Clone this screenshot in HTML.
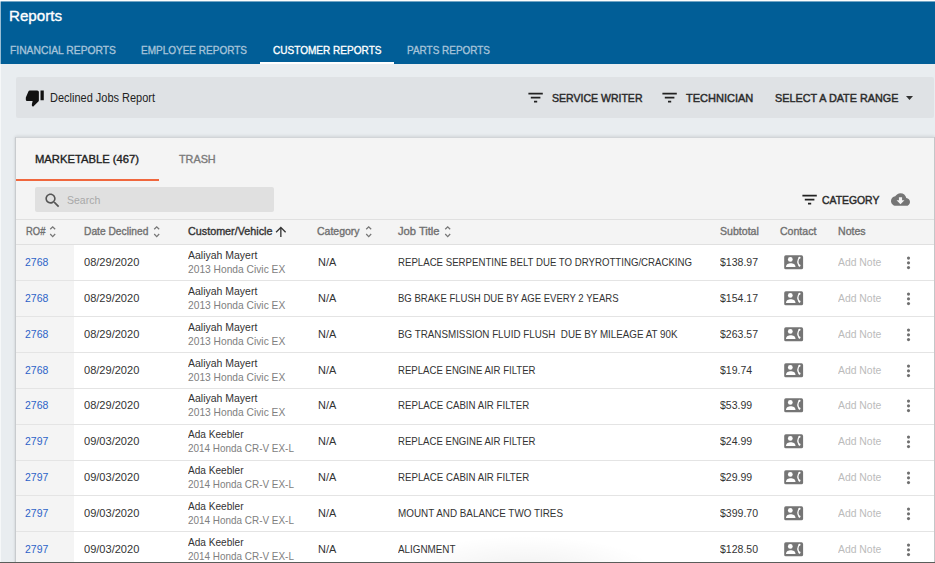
<!DOCTYPE html><html><head><meta charset="utf-8"><style>
html,body{margin:0;padding:0;width:935px;height:563px;overflow:hidden;background:#e9edf0;}
body{position:relative;font-family:"Liberation Sans",sans-serif;}
div{position:absolute;}
.t{white-space:nowrap;line-height:1;transform-origin:0 0;}
</style></head><body>
<div style="left:0px;top:0px;width:935px;height:563px;background:#e9edf0;"></div>
<div style="left:0px;top:1px;width:935px;height:63px;background:#015e97;"></div>
<div class="t" style="left:8.6px;top:7.80px;font-size:15px;font-weight:normal;color:#fff;-webkit-text-stroke:0.35px #fff;transform:scaleX(1.0091);">Reports</div>
<div class="t" style="left:10px;top:45.19px;font-size:11px;font-weight:normal;color:#a6c3d9;-webkit-text-stroke:0.35px #a6c3d9;transform:scaleX(0.9374);">FINANCIAL REPORTS</div>
<div class="t" style="left:141px;top:45.19px;font-size:11px;font-weight:normal;color:#a6c3d9;-webkit-text-stroke:0.35px #a6c3d9;transform:scaleX(0.9094);">EMPLOYEE REPORTS</div>
<div class="t" style="left:273px;top:45.19px;font-size:11px;font-weight:normal;color:#fff;-webkit-text-stroke:0.35px #fff;transform:scaleX(0.9135);">CUSTOMER REPORTS</div>
<div class="t" style="left:407px;top:45.19px;font-size:11px;font-weight:normal;color:#a6c3d9;-webkit-text-stroke:0.35px #a6c3d9;transform:scaleX(0.9052);">PARTS REPORTS</div>
<div style="left:260px;top:62px;width:134px;height:2px;background:#fff;"></div>
<div style="left:16px;top:77px;width:918px;height:41px;background:#dfe2e5;border-radius:2px;"></div>
<svg style="position:absolute;left:25.0px;top:88.0px;width:19.6px;height:19.6px;" viewBox="0 0 24 24"><path fill="#111" d="M15 3H6c-.83 0-1.54.5-1.84 1.22l-3.02 7.05c-.09.23-.14.47-.14.73v2c0 1.1.9 2 2 2h6.31l-.95 4.57-.03.32c0 .41.17.79.44 1.06L9.83 23l6.58-6.59c.37-.36.59-.86.59-1.41V5c0-1.1-.9-2-2-2zm4 0v12h4V3h-4z"/></svg>
<div class="t" style="left:50.4px;top:92.34px;font-size:12px;font-weight:normal;color:#222;transform:scaleX(0.9152);">Declined Jobs Report</div>
<svg style="position:absolute;left:525.6px;top:88.2px;width:19.2px;height:19.2px;" viewBox="0 0 24 24"><path fill="#222" d="M10 18h4v-2h-4v2zM3 6v2h18V6H3zm3 7h12v-2H6v2z"/></svg>
<div class="t" style="left:551.6px;top:93.32px;font-size:11.2px;font-weight:normal;color:#2b2b2b;-webkit-text-stroke:0.35px #2b2b2b;transform:scaleX(0.9413);-webkit-text-stroke-width:0.45px;">SERVICE WRITER</div>
<svg style="position:absolute;left:659.6px;top:88.2px;width:19.2px;height:19.2px;" viewBox="0 0 24 24"><path fill="#222" d="M10 18h4v-2h-4v2zM3 6v2h18V6H3zm3 7h12v-2H6v2z"/></svg>
<div class="t" style="left:685.6px;top:93.32px;font-size:11.2px;font-weight:normal;color:#2b2b2b;-webkit-text-stroke:0.35px #2b2b2b;transform:scaleX(0.9847);-webkit-text-stroke-width:0.45px;">TECHNICIAN</div>
<div class="t" style="left:775px;top:93.02px;font-size:11.2px;font-weight:normal;color:#2b2b2b;-webkit-text-stroke:0.35px #2b2b2b;transform:scaleX(0.9663);-webkit-text-stroke-width:0.45px;">SELECT A DATE RANGE</div>
<svg style="position:absolute;left:905.5px;top:96px;width:7px;height:4px;" viewBox="0 0 7 4"><path d="M0 0h7L3.5 4z" fill="#333"/></svg>
<div style="left:15px;top:137px;width:920px;height:426px;background:#f4f4f4;box-sizing:border-box;border:1px solid #d2d5d8;border-bottom:none;box-shadow:0 -1px 3px rgba(0,0,0,0.10);"></div>
<div class="t" style="left:35.2px;top:154.36px;font-size:10.8px;font-weight:normal;color:#222;-webkit-text-stroke:0.35px #222;transform:scaleX(1.0396);">MARKETABLE (467)</div>
<div class="t" style="left:178.7px;top:154.36px;font-size:10.8px;font-weight:normal;color:#7a7a7a;-webkit-text-stroke:0.35px #7a7a7a;transform:scaleX(1.0026);">TRASH</div>
<div style="left:16px;top:179px;width:143px;height:2px;background:#f0673d;"></div>
<div style="left:35px;top:187px;width:239px;height:25px;background:#e0e0e0;border-radius:2px;"></div>
<svg style="position:absolute;left:42.6px;top:190.9px;width:19px;height:19px;" viewBox="0 0 24 24"><path fill="#555" d="M15.5 14h-.79l-.28-.27C15.41 12.59 16 11.11 16 9.5 16 5.91 13.09 3 9.5 3S3 5.91 3 9.5 5.91 16 9.5 16c1.61 0 3.09-.59 4.23-1.57l.27.28v.79l5 4.99L20.49 19l-4.99-5zm-6 0C7.01 14 5 11.99 5 9.5S7.01 5 9.5 5 14 7.01 14 9.5 11.99 14 9.5 14z"/></svg>
<div class="t" style="left:67px;top:195.02px;font-size:11.2px;font-weight:normal;color:#a8a8a8;transform:scaleX(0.9383);">Search</div>
<svg style="position:absolute;left:799.6px;top:190.2px;width:19.2px;height:19.2px;" viewBox="0 0 24 24"><path fill="#222" d="M10 18h4v-2h-4v2zM3 6v2h18V6H3zm3 7h12v-2H6v2z"/></svg>
<div class="t" style="left:821.7px;top:195.02px;font-size:11.2px;font-weight:normal;color:#2b2b2b;-webkit-text-stroke:0.35px #2b2b2b;transform:scaleX(0.9285);-webkit-text-stroke-width:0.45px;">CATEGORY</div>
<svg style="position:absolute;left:891px;top:189.8px;width:19px;height:19px;" viewBox="0 0 24 24"><path fill="#757575" d="M19.35 10.04C18.67 6.59 15.64 4 12 4 9.11 4 6.6 5.64 5.35 8.04 2.34 8.36 0 10.91 0 14c0 3.31 2.69 6 6 6h13c2.76 0 5-2.24 5-5 0-2.64-2.05-4.78-4.65-4.96zM17 13l-5 5-5-5h3V9h4v4h3z"/></svg>
<div style="left:16px;top:219px;width:918px;height:1px;background:#e0e0e0;"></div>
<div style="left:16px;top:244px;width:918px;height:1px;background:#e0e0e0;"></div>
<div class="t" style="left:25.6px;top:226.04px;font-size:10.7px;font-weight:normal;color:#707070;-webkit-text-stroke:0.35px #707070;transform:scaleX(0.8818);">RO#</div>
<div class="t" style="left:83.8px;top:226.04px;font-size:10.7px;font-weight:normal;color:#707070;-webkit-text-stroke:0.35px #707070;transform:scaleX(0.9582);">Date Declined</div>
<div class="t" style="left:188.3px;top:226.04px;font-size:10.7px;font-weight:normal;color:#333;-webkit-text-stroke:0.35px #333;transform:scaleX(1.0077);">Customer/Vehicle</div>
<div class="t" style="left:317px;top:226.04px;font-size:10.7px;font-weight:normal;color:#707070;-webkit-text-stroke:0.35px #707070;transform:scaleX(0.9812);">Category</div>
<div class="t" style="left:398.4px;top:226.04px;font-size:10.7px;font-weight:normal;color:#707070;-webkit-text-stroke:0.35px #707070;transform:scaleX(1.0439);">Job Title</div>
<div class="t" style="left:720.1px;top:226.04px;font-size:10.7px;font-weight:normal;color:#707070;-webkit-text-stroke:0.35px #707070;transform:scaleX(0.9907);">Subtotal</div>
<div class="t" style="left:779.7px;top:226.04px;font-size:10.7px;font-weight:normal;color:#707070;-webkit-text-stroke:0.35px #707070;transform:scaleX(0.9871);">Contact</div>
<div class="t" style="left:837.7px;top:226.04px;font-size:10.7px;font-weight:normal;color:#707070;-webkit-text-stroke:0.35px #707070;transform:scaleX(0.9910);">Notes</div>
<svg style="position:absolute;left:45.2576px;top:224px;width:15.4px;height:15.4px;" viewBox="0 0 24 24"><path fill="#777" d="M12 5.83L15.17 9l1.41-1.41L12 3 7.41 7.59 8.83 9 12 5.83zm0 12.34L8.83 15l-1.41 1.41L12 21l4.59-4.59L15.17 15 12 18.17z"/></svg>
<svg style="position:absolute;left:148.7576px;top:224px;width:15.4px;height:15.4px;" viewBox="0 0 24 24"><path fill="#777" d="M12 5.83L15.17 9l1.41-1.41L12 3 7.41 7.59 8.83 9 12 5.83zm0 12.34L8.83 15l-1.41 1.41L12 21l4.59-4.59L15.17 15 12 18.17z"/></svg>
<svg style="position:absolute;left:360.55760000000004px;top:224px;width:15.4px;height:15.4px;" viewBox="0 0 24 24"><path fill="#777" d="M12 5.83L15.17 9l1.41-1.41L12 3 7.41 7.59 8.83 9 12 5.83zm0 12.34L8.83 15l-1.41 1.41L12 21l4.59-4.59L15.17 15 12 18.17z"/></svg>
<svg style="position:absolute;left:440.05760000000004px;top:224px;width:15.4px;height:15.4px;" viewBox="0 0 24 24"><path fill="#777" d="M12 5.83L15.17 9l1.41-1.41L12 3 7.41 7.59 8.83 9 12 5.83zm0 12.34L8.83 15l-1.41 1.41L12 21l4.59-4.59L15.17 15 12 18.17z"/></svg>
<svg style="position:absolute;left:273.3px;top:224px;width:15.7px;height:15.7px;" viewBox="0 0 24 24"><path fill="#333" d="M4 12l1.41 1.41L11 7.83V20h2V7.83l5.58 5.59L20 12l-8-8-8 8z"/></svg>
<div style="left:16px;top:245px;width:918px;height:35px;background:#fff;"></div>
<div style="left:16px;top:245px;width:58px;height:35px;background:#f4f4f4;"></div>
<div style="left:16px;top:280px;width:918px;height:1px;background:#e4e4e4;"></div>
<div class="t" style="left:25.4px;top:257.19px;font-size:11px;font-weight:normal;color:#2d63c8;transform:scaleX(0.9521);">2768</div>
<div class="t" style="left:83.7px;top:257.19px;font-size:11px;font-weight:normal;color:#333;transform:scaleX(1.0045);">08/29/2020</div>
<div class="t" style="left:188.2px;top:249.69px;font-size:11px;font-weight:normal;color:#333;transform:scaleX(0.9525);">Aaliyah Mayert</div>
<div class="t" style="left:188.2px;top:264.13px;font-size:10.6px;font-weight:normal;color:#808080;transform:scaleX(0.9657);">2013 Honda Civic EX</div>
<div class="t" style="left:317.5px;top:257.19px;font-size:11px;font-weight:normal;color:#333;transform:scaleX(0.9925);">N/A</div>
<div class="t" style="left:398.3px;top:257.19px;font-size:11px;font-weight:normal;color:#333;transform:scaleX(0.8772);">REPLACE SERPENTINE BELT DUE TO DRYROTTING/CRACKING</div>
<div class="t" style="left:719.6px;top:257.19px;font-size:11px;font-weight:normal;color:#333;transform:scaleX(0.9560);">$138.97</div>
<svg style="position:absolute;left:784px;top:255px;width:20px;height:15px;" viewBox="0 0 20 15"><rect x="0.2" y="0.3" width="18.9" height="13.95" rx="1.6" fill="#757575"/><circle cx="6.3" cy="4.4" r="2.4" fill="#fff"/><path d="M2 11.9C2 9.3 4.5 8.3 6.75 8.3S11.5 9.3 11.5 11.9Z" fill="#fff"/><path d="M15.4 2.6Q12.3 6.7 15.4 10.8" stroke="#fff" stroke-width="1.3" fill="none" stroke-linecap="round"/><circle cx="15.5" cy="2.8" r="1.05" fill="#fff"/><circle cx="15.5" cy="10.6" r="1.05" fill="#fff"/></svg>
<div class="t" style="left:838px;top:257.19px;font-size:11px;font-weight:normal;color:#bbb;transform:scaleX(0.9441);">Add Note</div>
<svg style="position:absolute;left:905px;top:255px;width:7px;height:16px;" viewBox="0 0 7 16"><g fill="#707070"><circle cx="3.5" cy="3.1" r="1.55"/><circle cx="3.5" cy="7.85" r="1.55"/><circle cx="3.5" cy="12.6" r="1.55"/></g></svg>
<div style="left:16px;top:281px;width:918px;height:35px;background:#fff;"></div>
<div style="left:16px;top:281px;width:58px;height:35px;background:#f4f4f4;"></div>
<div style="left:16px;top:316px;width:918px;height:1px;background:#e4e4e4;"></div>
<div class="t" style="left:25.4px;top:293.19px;font-size:11px;font-weight:normal;color:#2d63c8;transform:scaleX(0.9521);">2768</div>
<div class="t" style="left:83.7px;top:293.19px;font-size:11px;font-weight:normal;color:#333;transform:scaleX(1.0045);">08/29/2020</div>
<div class="t" style="left:188.2px;top:285.69px;font-size:11px;font-weight:normal;color:#333;transform:scaleX(0.9525);">Aaliyah Mayert</div>
<div class="t" style="left:188.2px;top:300.13px;font-size:10.6px;font-weight:normal;color:#808080;transform:scaleX(0.9657);">2013 Honda Civic EX</div>
<div class="t" style="left:317.5px;top:293.19px;font-size:11px;font-weight:normal;color:#333;transform:scaleX(0.9925);">N/A</div>
<div class="t" style="left:398.3px;top:293.19px;font-size:11px;font-weight:normal;color:#333;transform:scaleX(0.8677);">BG BRAKE FLUSH DUE BY AGE EVERY 2 YEARS</div>
<div class="t" style="left:719.6px;top:293.19px;font-size:11px;font-weight:normal;color:#333;transform:scaleX(0.9560);">$154.17</div>
<svg style="position:absolute;left:784px;top:291px;width:20px;height:15px;" viewBox="0 0 20 15"><rect x="0.2" y="0.3" width="18.9" height="13.95" rx="1.6" fill="#757575"/><circle cx="6.3" cy="4.4" r="2.4" fill="#fff"/><path d="M2 11.9C2 9.3 4.5 8.3 6.75 8.3S11.5 9.3 11.5 11.9Z" fill="#fff"/><path d="M15.4 2.6Q12.3 6.7 15.4 10.8" stroke="#fff" stroke-width="1.3" fill="none" stroke-linecap="round"/><circle cx="15.5" cy="2.8" r="1.05" fill="#fff"/><circle cx="15.5" cy="10.6" r="1.05" fill="#fff"/></svg>
<div class="t" style="left:838px;top:293.19px;font-size:11px;font-weight:normal;color:#bbb;transform:scaleX(0.9441);">Add Note</div>
<svg style="position:absolute;left:905px;top:291px;width:7px;height:16px;" viewBox="0 0 7 16"><g fill="#707070"><circle cx="3.5" cy="3.1" r="1.55"/><circle cx="3.5" cy="7.85" r="1.55"/><circle cx="3.5" cy="12.6" r="1.55"/></g></svg>
<div style="left:16px;top:317px;width:918px;height:35px;background:#fff;"></div>
<div style="left:16px;top:317px;width:58px;height:35px;background:#f4f4f4;"></div>
<div style="left:16px;top:352px;width:918px;height:1px;background:#e4e4e4;"></div>
<div class="t" style="left:25.4px;top:329.19px;font-size:11px;font-weight:normal;color:#2d63c8;transform:scaleX(0.9521);">2768</div>
<div class="t" style="left:83.7px;top:329.19px;font-size:11px;font-weight:normal;color:#333;transform:scaleX(1.0045);">08/29/2020</div>
<div class="t" style="left:188.2px;top:321.69px;font-size:11px;font-weight:normal;color:#333;transform:scaleX(0.9525);">Aaliyah Mayert</div>
<div class="t" style="left:188.2px;top:336.13px;font-size:10.6px;font-weight:normal;color:#808080;transform:scaleX(0.9657);">2013 Honda Civic EX</div>
<div class="t" style="left:317.5px;top:329.19px;font-size:11px;font-weight:normal;color:#333;transform:scaleX(0.9925);">N/A</div>
<div class="t" style="left:398.3px;top:329.19px;font-size:11px;font-weight:normal;color:#333;transform:scaleX(0.8919);">BG TRANSMISSION FLUID FLUSH&nbsp; DUE BY MILEAGE AT 90K</div>
<div class="t" style="left:719.6px;top:329.19px;font-size:11px;font-weight:normal;color:#333;transform:scaleX(0.9560);">$263.57</div>
<svg style="position:absolute;left:784px;top:327px;width:20px;height:15px;" viewBox="0 0 20 15"><rect x="0.2" y="0.3" width="18.9" height="13.95" rx="1.6" fill="#757575"/><circle cx="6.3" cy="4.4" r="2.4" fill="#fff"/><path d="M2 11.9C2 9.3 4.5 8.3 6.75 8.3S11.5 9.3 11.5 11.9Z" fill="#fff"/><path d="M15.4 2.6Q12.3 6.7 15.4 10.8" stroke="#fff" stroke-width="1.3" fill="none" stroke-linecap="round"/><circle cx="15.5" cy="2.8" r="1.05" fill="#fff"/><circle cx="15.5" cy="10.6" r="1.05" fill="#fff"/></svg>
<div class="t" style="left:838px;top:329.19px;font-size:11px;font-weight:normal;color:#bbb;transform:scaleX(0.9441);">Add Note</div>
<svg style="position:absolute;left:905px;top:327px;width:7px;height:16px;" viewBox="0 0 7 16"><g fill="#707070"><circle cx="3.5" cy="3.1" r="1.55"/><circle cx="3.5" cy="7.85" r="1.55"/><circle cx="3.5" cy="12.6" r="1.55"/></g></svg>
<div style="left:16px;top:353px;width:918px;height:35px;background:#fff;"></div>
<div style="left:16px;top:353px;width:58px;height:35px;background:#f4f4f4;"></div>
<div style="left:16px;top:388px;width:918px;height:1px;background:#e4e4e4;"></div>
<div class="t" style="left:25.4px;top:365.19px;font-size:11px;font-weight:normal;color:#2d63c8;transform:scaleX(0.9521);">2768</div>
<div class="t" style="left:83.7px;top:365.19px;font-size:11px;font-weight:normal;color:#333;transform:scaleX(1.0045);">08/29/2020</div>
<div class="t" style="left:188.2px;top:357.69px;font-size:11px;font-weight:normal;color:#333;transform:scaleX(0.9525);">Aaliyah Mayert</div>
<div class="t" style="left:188.2px;top:372.13px;font-size:10.6px;font-weight:normal;color:#808080;transform:scaleX(0.9657);">2013 Honda Civic EX</div>
<div class="t" style="left:317.5px;top:365.19px;font-size:11px;font-weight:normal;color:#333;transform:scaleX(0.9925);">N/A</div>
<div class="t" style="left:398.3px;top:365.19px;font-size:11px;font-weight:normal;color:#333;transform:scaleX(0.8730);">REPLACE ENGINE AIR FILTER</div>
<div class="t" style="left:719.6px;top:365.19px;font-size:11px;font-weight:normal;color:#333;transform:scaleX(0.9560);">$19.74</div>
<svg style="position:absolute;left:784px;top:363px;width:20px;height:15px;" viewBox="0 0 20 15"><rect x="0.2" y="0.3" width="18.9" height="13.95" rx="1.6" fill="#757575"/><circle cx="6.3" cy="4.4" r="2.4" fill="#fff"/><path d="M2 11.9C2 9.3 4.5 8.3 6.75 8.3S11.5 9.3 11.5 11.9Z" fill="#fff"/><path d="M15.4 2.6Q12.3 6.7 15.4 10.8" stroke="#fff" stroke-width="1.3" fill="none" stroke-linecap="round"/><circle cx="15.5" cy="2.8" r="1.05" fill="#fff"/><circle cx="15.5" cy="10.6" r="1.05" fill="#fff"/></svg>
<div class="t" style="left:838px;top:365.19px;font-size:11px;font-weight:normal;color:#bbb;transform:scaleX(0.9441);">Add Note</div>
<svg style="position:absolute;left:905px;top:363px;width:7px;height:16px;" viewBox="0 0 7 16"><g fill="#707070"><circle cx="3.5" cy="3.1" r="1.55"/><circle cx="3.5" cy="7.85" r="1.55"/><circle cx="3.5" cy="12.6" r="1.55"/></g></svg>
<div style="left:16px;top:389px;width:918px;height:35px;background:#fff;"></div>
<div style="left:16px;top:389px;width:58px;height:35px;background:#f4f4f4;"></div>
<div style="left:16px;top:424px;width:918px;height:1px;background:#e4e4e4;"></div>
<div class="t" style="left:25.4px;top:400.19px;font-size:11px;font-weight:normal;color:#2d63c8;transform:scaleX(0.9521);">2768</div>
<div class="t" style="left:83.7px;top:400.19px;font-size:11px;font-weight:normal;color:#333;transform:scaleX(1.0045);">08/29/2020</div>
<div class="t" style="left:188.2px;top:392.69px;font-size:11px;font-weight:normal;color:#333;transform:scaleX(0.9525);">Aaliyah Mayert</div>
<div class="t" style="left:188.2px;top:407.13px;font-size:10.6px;font-weight:normal;color:#808080;transform:scaleX(0.9657);">2013 Honda Civic EX</div>
<div class="t" style="left:317.5px;top:400.19px;font-size:11px;font-weight:normal;color:#333;transform:scaleX(0.9925);">N/A</div>
<div class="t" style="left:398.3px;top:400.19px;font-size:11px;font-weight:normal;color:#333;transform:scaleX(0.8808);">REPLACE CABIN AIR FILTER</div>
<div class="t" style="left:719.6px;top:400.19px;font-size:11px;font-weight:normal;color:#333;transform:scaleX(0.9560);">$53.99</div>
<svg style="position:absolute;left:784px;top:398px;width:20px;height:15px;" viewBox="0 0 20 15"><rect x="0.2" y="0.3" width="18.9" height="13.95" rx="1.6" fill="#757575"/><circle cx="6.3" cy="4.4" r="2.4" fill="#fff"/><path d="M2 11.9C2 9.3 4.5 8.3 6.75 8.3S11.5 9.3 11.5 11.9Z" fill="#fff"/><path d="M15.4 2.6Q12.3 6.7 15.4 10.8" stroke="#fff" stroke-width="1.3" fill="none" stroke-linecap="round"/><circle cx="15.5" cy="2.8" r="1.05" fill="#fff"/><circle cx="15.5" cy="10.6" r="1.05" fill="#fff"/></svg>
<div class="t" style="left:838px;top:400.19px;font-size:11px;font-weight:normal;color:#bbb;transform:scaleX(0.9441);">Add Note</div>
<svg style="position:absolute;left:905px;top:398px;width:7px;height:16px;" viewBox="0 0 7 16"><g fill="#707070"><circle cx="3.5" cy="3.1" r="1.55"/><circle cx="3.5" cy="7.85" r="1.55"/><circle cx="3.5" cy="12.6" r="1.55"/></g></svg>
<div style="left:16px;top:425px;width:918px;height:35px;background:#fff;"></div>
<div style="left:16px;top:425px;width:58px;height:35px;background:#f4f4f4;"></div>
<div style="left:16px;top:460px;width:918px;height:1px;background:#e4e4e4;"></div>
<div class="t" style="left:25.4px;top:436.19px;font-size:11px;font-weight:normal;color:#2d63c8;transform:scaleX(0.9521);">2797</div>
<div class="t" style="left:83.7px;top:436.19px;font-size:11px;font-weight:normal;color:#333;transform:scaleX(1.0045);">09/03/2020</div>
<div class="t" style="left:188.2px;top:428.69px;font-size:11px;font-weight:normal;color:#333;transform:scaleX(0.9167);">Ada Keebler</div>
<div class="t" style="left:188.2px;top:443.13px;font-size:10.6px;font-weight:normal;color:#808080;transform:scaleX(0.9370);">2014 Honda CR-V EX-L</div>
<div class="t" style="left:317.5px;top:436.19px;font-size:11px;font-weight:normal;color:#333;transform:scaleX(0.9925);">N/A</div>
<div class="t" style="left:398.3px;top:436.19px;font-size:11px;font-weight:normal;color:#333;transform:scaleX(0.8730);">REPLACE ENGINE AIR FILTER</div>
<div class="t" style="left:719.6px;top:436.19px;font-size:11px;font-weight:normal;color:#333;transform:scaleX(0.9560);">$24.99</div>
<svg style="position:absolute;left:784px;top:434px;width:20px;height:15px;" viewBox="0 0 20 15"><rect x="0.2" y="0.3" width="18.9" height="13.95" rx="1.6" fill="#757575"/><circle cx="6.3" cy="4.4" r="2.4" fill="#fff"/><path d="M2 11.9C2 9.3 4.5 8.3 6.75 8.3S11.5 9.3 11.5 11.9Z" fill="#fff"/><path d="M15.4 2.6Q12.3 6.7 15.4 10.8" stroke="#fff" stroke-width="1.3" fill="none" stroke-linecap="round"/><circle cx="15.5" cy="2.8" r="1.05" fill="#fff"/><circle cx="15.5" cy="10.6" r="1.05" fill="#fff"/></svg>
<div class="t" style="left:838px;top:436.19px;font-size:11px;font-weight:normal;color:#bbb;transform:scaleX(0.9441);">Add Note</div>
<svg style="position:absolute;left:905px;top:434px;width:7px;height:16px;" viewBox="0 0 7 16"><g fill="#707070"><circle cx="3.5" cy="3.1" r="1.55"/><circle cx="3.5" cy="7.85" r="1.55"/><circle cx="3.5" cy="12.6" r="1.55"/></g></svg>
<div style="left:16px;top:461px;width:918px;height:34px;background:#fff;"></div>
<div style="left:16px;top:461px;width:58px;height:34px;background:#f4f4f4;"></div>
<div style="left:16px;top:495px;width:918px;height:1px;background:#e4e4e4;"></div>
<div class="t" style="left:25.4px;top:472.19px;font-size:11px;font-weight:normal;color:#2d63c8;transform:scaleX(0.9521);">2797</div>
<div class="t" style="left:83.7px;top:472.19px;font-size:11px;font-weight:normal;color:#333;transform:scaleX(1.0045);">09/03/2020</div>
<div class="t" style="left:188.2px;top:464.69px;font-size:11px;font-weight:normal;color:#333;transform:scaleX(0.9167);">Ada Keebler</div>
<div class="t" style="left:188.2px;top:479.13px;font-size:10.6px;font-weight:normal;color:#808080;transform:scaleX(0.9370);">2014 Honda CR-V EX-L</div>
<div class="t" style="left:317.5px;top:472.19px;font-size:11px;font-weight:normal;color:#333;transform:scaleX(0.9925);">N/A</div>
<div class="t" style="left:398.3px;top:472.19px;font-size:11px;font-weight:normal;color:#333;transform:scaleX(0.8808);">REPLACE CABIN AIR FILTER</div>
<div class="t" style="left:719.6px;top:472.19px;font-size:11px;font-weight:normal;color:#333;transform:scaleX(0.9560);">$29.99</div>
<svg style="position:absolute;left:784px;top:470px;width:20px;height:15px;" viewBox="0 0 20 15"><rect x="0.2" y="0.3" width="18.9" height="13.95" rx="1.6" fill="#757575"/><circle cx="6.3" cy="4.4" r="2.4" fill="#fff"/><path d="M2 11.9C2 9.3 4.5 8.3 6.75 8.3S11.5 9.3 11.5 11.9Z" fill="#fff"/><path d="M15.4 2.6Q12.3 6.7 15.4 10.8" stroke="#fff" stroke-width="1.3" fill="none" stroke-linecap="round"/><circle cx="15.5" cy="2.8" r="1.05" fill="#fff"/><circle cx="15.5" cy="10.6" r="1.05" fill="#fff"/></svg>
<div class="t" style="left:838px;top:472.19px;font-size:11px;font-weight:normal;color:#bbb;transform:scaleX(0.9441);">Add Note</div>
<svg style="position:absolute;left:905px;top:470px;width:7px;height:16px;" viewBox="0 0 7 16"><g fill="#707070"><circle cx="3.5" cy="3.1" r="1.55"/><circle cx="3.5" cy="7.85" r="1.55"/><circle cx="3.5" cy="12.6" r="1.55"/></g></svg>
<div style="left:16px;top:496px;width:918px;height:35px;background:#fff;"></div>
<div style="left:16px;top:496px;width:58px;height:35px;background:#f4f4f4;"></div>
<div style="left:16px;top:531px;width:918px;height:1px;background:#e4e4e4;"></div>
<div class="t" style="left:25.4px;top:508.19px;font-size:11px;font-weight:normal;color:#2d63c8;transform:scaleX(0.9521);">2797</div>
<div class="t" style="left:83.7px;top:508.19px;font-size:11px;font-weight:normal;color:#333;transform:scaleX(1.0045);">09/03/2020</div>
<div class="t" style="left:188.2px;top:500.69px;font-size:11px;font-weight:normal;color:#333;transform:scaleX(0.9167);">Ada Keebler</div>
<div class="t" style="left:188.2px;top:515.13px;font-size:10.6px;font-weight:normal;color:#808080;transform:scaleX(0.9370);">2014 Honda CR-V EX-L</div>
<div class="t" style="left:317.5px;top:508.19px;font-size:11px;font-weight:normal;color:#333;transform:scaleX(0.9925);">N/A</div>
<div class="t" style="left:398.3px;top:508.19px;font-size:11px;font-weight:normal;color:#333;transform:scaleX(0.8968);">MOUNT AND BALANCE TWO TIRES</div>
<div class="t" style="left:719.6px;top:508.19px;font-size:11px;font-weight:normal;color:#333;transform:scaleX(0.9560);">$399.70</div>
<svg style="position:absolute;left:784px;top:506px;width:20px;height:15px;" viewBox="0 0 20 15"><rect x="0.2" y="0.3" width="18.9" height="13.95" rx="1.6" fill="#757575"/><circle cx="6.3" cy="4.4" r="2.4" fill="#fff"/><path d="M2 11.9C2 9.3 4.5 8.3 6.75 8.3S11.5 9.3 11.5 11.9Z" fill="#fff"/><path d="M15.4 2.6Q12.3 6.7 15.4 10.8" stroke="#fff" stroke-width="1.3" fill="none" stroke-linecap="round"/><circle cx="15.5" cy="2.8" r="1.05" fill="#fff"/><circle cx="15.5" cy="10.6" r="1.05" fill="#fff"/></svg>
<div class="t" style="left:838px;top:508.19px;font-size:11px;font-weight:normal;color:#bbb;transform:scaleX(0.9441);">Add Note</div>
<svg style="position:absolute;left:905px;top:506px;width:7px;height:16px;" viewBox="0 0 7 16"><g fill="#707070"><circle cx="3.5" cy="3.1" r="1.55"/><circle cx="3.5" cy="7.85" r="1.55"/><circle cx="3.5" cy="12.6" r="1.55"/></g></svg>
<div style="left:16px;top:532px;width:918px;height:35px;background:#fff;"></div>
<div style="left:16px;top:532px;width:58px;height:35px;background:#f4f4f4;"></div>
<div style="left:16px;top:567px;width:918px;height:1px;background:#e4e4e4;"></div>
<div class="t" style="left:25.4px;top:544.19px;font-size:11px;font-weight:normal;color:#2d63c8;transform:scaleX(0.9521);">2797</div>
<div class="t" style="left:83.7px;top:544.19px;font-size:11px;font-weight:normal;color:#333;transform:scaleX(1.0045);">09/03/2020</div>
<div class="t" style="left:188.2px;top:536.69px;font-size:11px;font-weight:normal;color:#333;transform:scaleX(0.9167);">Ada Keebler</div>
<div class="t" style="left:188.2px;top:551.13px;font-size:10.6px;font-weight:normal;color:#808080;transform:scaleX(0.9370);">2014 Honda CR-V EX-L</div>
<div class="t" style="left:317.5px;top:544.19px;font-size:11px;font-weight:normal;color:#333;transform:scaleX(0.9925);">N/A</div>
<div class="t" style="left:398.3px;top:544.19px;font-size:11px;font-weight:normal;color:#333;transform:scaleX(0.8960);">ALIGNMENT</div>
<div class="t" style="left:719.6px;top:544.19px;font-size:11px;font-weight:normal;color:#333;transform:scaleX(0.9560);">$128.50</div>
<svg style="position:absolute;left:784px;top:542px;width:20px;height:15px;" viewBox="0 0 20 15"><rect x="0.2" y="0.3" width="18.9" height="13.95" rx="1.6" fill="#757575"/><circle cx="6.3" cy="4.4" r="2.4" fill="#fff"/><path d="M2 11.9C2 9.3 4.5 8.3 6.75 8.3S11.5 9.3 11.5 11.9Z" fill="#fff"/><path d="M15.4 2.6Q12.3 6.7 15.4 10.8" stroke="#fff" stroke-width="1.3" fill="none" stroke-linecap="round"/><circle cx="15.5" cy="2.8" r="1.05" fill="#fff"/><circle cx="15.5" cy="10.6" r="1.05" fill="#fff"/></svg>
<div class="t" style="left:838px;top:544.19px;font-size:11px;font-weight:normal;color:#bbb;transform:scaleX(0.9441);">Add Note</div>
<svg style="position:absolute;left:905px;top:542px;width:7px;height:16px;" viewBox="0 0 7 16"><g fill="#707070"><circle cx="3.5" cy="3.1" r="1.55"/><circle cx="3.5" cy="7.85" r="1.55"/><circle cx="3.5" cy="12.6" r="1.55"/></g></svg>
<div style="left:934px;top:137px;width:1px;height:426px;background:#c4c6c8;"></div>
<div style="left:14px;top:138px;width:1px;height:425px;background:#dce0e3;"></div>
<div style="left:15px;top:137px;width:1px;height:426px;background:#c8cbce;"></div>
<div style="left:380px;top:520px;width:300px;height:60px;background:radial-gradient(ellipse 130px 36px at 145px 52px, rgba(0,0,0,0.06), rgba(0,0,0,0) 100%);"></div>
<div style="left:0px;top:562px;width:935px;height:1px;background:#5a5d5a;"></div>
<div style="left:0px;top:0px;width:1px;height:562px;background:rgba(255,255,255,0.6);"></div>
<div style="left:0px;top:0px;width:935px;height:1px;background:#fcfdfd;"></div>
<div style="left:0px;top:1px;width:935px;height:1px;background:rgba(255,255,255,0.45);"></div>
</body></html>
